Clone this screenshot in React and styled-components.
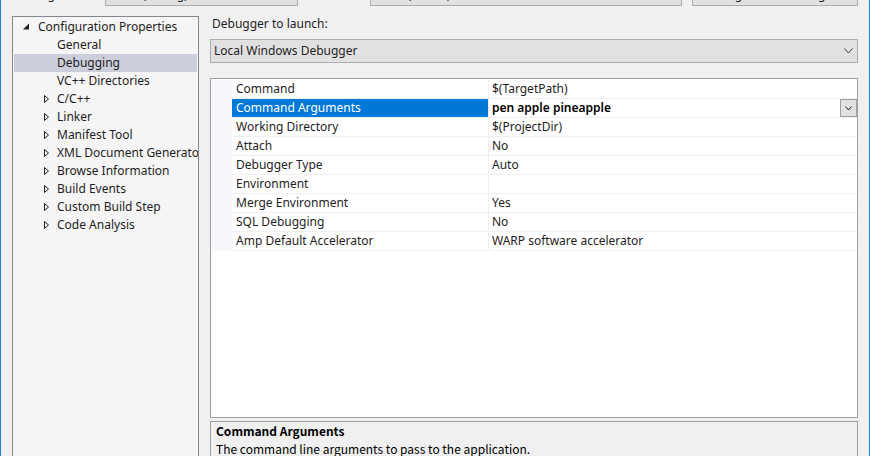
import React from 'react';
import styled, { createGlobalStyle } from 'styled-components';

const Global = createGlobalStyle`
  html, body { margin: 0; padding: 0; background: #f0f0f0; }
  body {
    font-family: "Noto Sans", "Open Sans", sans-serif;
    font-size: 12px;
    color: #1e1e1e;
  }
  * { box-sizing: border-box; }
`;

const Window = styled.div`
  width: 870px;
  height: 456px;
  border-left: 1px solid #1883d7;
  border-right: 1px solid #1883d7;
  background: #f0f0f0;
  overflow: hidden;
  display: flex;
  flex-direction: column;
`;

const TopBar = styled.div`
  display: flex;
  align-items: center;
  height: 23px;
  margin-top: -17px;
  padding-left: 17px;
  flex: none;
`;

const TopLabel = styled.div`
  width: ${p => p.$w}px;
  flex: none;
  line-height: 16px;
  white-space: nowrap;
  overflow: hidden;
`;

const TopButton = styled.div`
  width: ${p => p.$w}px;
  margin-left: ${p => p.$ml || 0}px;
  height: 23px;
  flex: none;
  background: #e1e1e1;
  border: 1px solid #adadad;
  display: flex;
  align-items: center;
  justify-content: ${p => (p.$center ? 'center' : 'flex-start')};
  padding-left: ${p => (p.$center ? 0 : 3)}px;
  white-space: nowrap;
  line-height: 16px;
`;

const Main = styled.div`
  display: flex;
  flex: 1;
  min-height: 0;
  margin-top: 10px;
`;

const Tree = styled.div`
  width: 187px;
  margin-left: 11px;
  flex: none;
  background: #f5f5f5;
  border: 1px solid #828790;
  border-bottom: none;
  overflow: hidden;
  padding-top: 1px;
`;

const TreeRow = styled.div`
  height: 18px;
  margin: 0 1px;
  display: flex;
  align-items: center;
  padding-left: ${p => 8 + p.$level * 19}px;
  background: ${p => (p.$selected ? '#cccedb' : 'transparent')};
  white-space: nowrap;
  line-height: 16px;
`;

const Toggle = styled.span`
  width: 16px;
  height: 18px;
  flex: none;
  display: flex;
  align-items: center;
`;

const Right = styled.div`
  width: 648px;
  margin-left: 11px;
  flex: none;
  display: flex;
  flex-direction: column;
  min-height: 0;
`;

const FieldLabel = styled.div`
  flex: none;
  height: 16px;
  line-height: 16px;
  padding-left: 2px;
`;

const Combo = styled.div`
  flex: none;
  margin-top: 7px;
  height: 24px;
  background: #e1e1e1;
  border: 1px solid #adadad;
  display: flex;
  align-items: center;
  justify-content: space-between;
  padding: 0 4px 0 3px;
  line-height: 16px;
`;

const Grid = styled.div`
  margin-top: 15px;
  height: 340px;
  flex: none;
  background: #ffffff;
  border: 1px solid #a0a0a0;
  padding-top: 1px;
`;

const GridRow = styled.div`
  display: grid;
  grid-template-columns: 21px 256px 1px 1fr;
  height: 19px;
`;

const Gutter = styled.div`
  background: #f5f7fb;
`;

const NameCell = styled.div`
  height: 19px;
  border-bottom: 1px solid #f0f0f0;
  background: ${p => (p.$selected ? '#0078d7' : '#ffffff')};
  color: ${p => (p.$selected ? '#ffffff' : '#1e1e1e')};
  padding-left: 4px;
  display: flex;
  align-items: center;
  line-height: 16px;
  white-space: nowrap;
`;

const Sep = styled.div`
  background: #f0f0f0;
`;

const ValueCell = styled.div`
  height: 19px;
  border-bottom: 1px solid #f0f0f0;
  display: flex;
  align-items: center;
  padding-left: 3px;
  line-height: 16px;
  white-space: nowrap;
  color: ${p => (p.$editing ? '#000000' : '#1e1e1e')};
  font-weight: ${p => (p.$editing ? 600 : 400)};
`;

const ValueText = styled.span`
  flex: 1;
`;

const DropButton = styled.div`
  width: 17px;
  height: 18px;
  align-self: flex-start;
  background: #e1e1e1;
  border: 1px solid #a0a0a0;
  display: flex;
  align-items: center;
  justify-content: center;
`;

const Description = styled.div`
  margin-top: 3px;
  flex: 1;
  min-height: 0;
  overflow: hidden;
  background: #f0f0f0;
  border: 1px solid #a0a0a0;
  border-bottom: none;
  padding: 0 5px;
  font-family: "Noto Sans CJK TC", "Noto Sans", sans-serif;
  font-size: 12px;
  color: #000;
`;

const DescTitle = styled.div`
  font-weight: 600;
  line-height: 18px;
`;

const DescText = styled.div`
  line-height: 17px;
`;

const Expanded = () => (
  <svg width="16" height="18" viewBox="0 0 16 18">
    <polygon points="7,5.5 7,11.5 1,11.5" fill="#1e1e1e" />
  </svg>
);

const Collapsed = () => (
  <svg width="16" height="18" viewBox="0 0 16 18">
    <polygon points="3.5,5.5 3.5,12.5 7.5,9" fill="none" stroke="#1e1e1e" strokeWidth="1" />
  </svg>
);

const Chevron = ({ w = 9, h = 5, color = '#3c3c3c' }) => (
  <svg width={w} height={h + 1} viewBox={`0 0 ${w} ${h + 1}`}>
    <polyline points={`0.5,0.5 ${w / 2},${h} ${w - 0.5},0.5`} fill="none" stroke={color} strokeWidth="1" />
  </svg>
);

const tree = [
  { label: 'Configuration Properties', level: 0, icon: 'open' },
  { label: 'General', level: 1 },
  { label: 'Debugging', level: 1, selected: true },
  { label: 'VC++ Directories', level: 1 },
  { label: 'C/C++', level: 1, icon: 'closed' },
  { label: 'Linker', level: 1, icon: 'closed' },
  { label: 'Manifest Tool', level: 1, icon: 'closed' },
  { label: 'XML Document Generator', level: 1, icon: 'closed' },
  { label: 'Browse Information', level: 1, icon: 'closed' },
  { label: 'Build Events', level: 1, icon: 'closed' },
  { label: 'Custom Build Step', level: 1, icon: 'closed' },
  { label: 'Code Analysis', level: 1, icon: 'closed' },
];

const props = [
  ['Command', '$(TargetPath)'],
  ['Command Arguments', 'pen apple pineapple', true],
  ['Working Directory', '$(ProjectDir)'],
  ['Attach', 'No'],
  ['Debugger Type', 'Auto'],
  ['Environment', ''],
  ['Merge Environment', 'Yes'],
  ['SQL Debugging', 'No'],
  ['Amp Default Accelerator', 'WARP software accelerator'],
];

export default function App() {
  return (
    <>
      <Global />
      <Window>
        <TopBar>
          <TopLabel $w={87}>Configuration:</TopLabel>
          <TopButton $w={193}>Active(Debug)</TopButton>
          <TopLabel $w={72}>&nbsp;Platform:</TopLabel>
          <TopButton $w={312}>Active(Win32)</TopButton>
          <TopButton $w={166} $ml={10} $center>Configuration Manager...</TopButton>
        </TopBar>
        <Main>
          <Tree>
            {tree.map(t => (
              <TreeRow key={t.label} $level={t.level} $selected={t.selected}>
                <Toggle>
                  {t.icon === 'open' && <Expanded />}
                  {t.icon === 'closed' && <Collapsed />}
                </Toggle>
                {t.label}
              </TreeRow>
            ))}
          </Tree>
          <Right>
            <FieldLabel>Debugger to launch:</FieldLabel>
            <Combo>
              <span>Local Windows Debugger</span>
              <Chevron />
            </Combo>
            <Grid>
              {props.map(([name, value, editing]) => (
                <GridRow key={name}>
                  <Gutter />
                  <NameCell $selected={editing}>{name}</NameCell>
                  <Sep />
                  <ValueCell $editing={editing}>
                    <ValueText>{value}</ValueText>
                    {editing && (
                      <DropButton>
                        <Chevron w={7} h={4} color="#1e1e1e" />
                      </DropButton>
                    )}
                  </ValueCell>
                </GridRow>
              ))}
            </Grid>
            <Description>
              <DescTitle>Command Arguments</DescTitle>
              <DescText>The command line arguments to pass to the application.</DescText>
            </Description>
          </Right>
        </Main>
      </Window>
    </>
  );
}
